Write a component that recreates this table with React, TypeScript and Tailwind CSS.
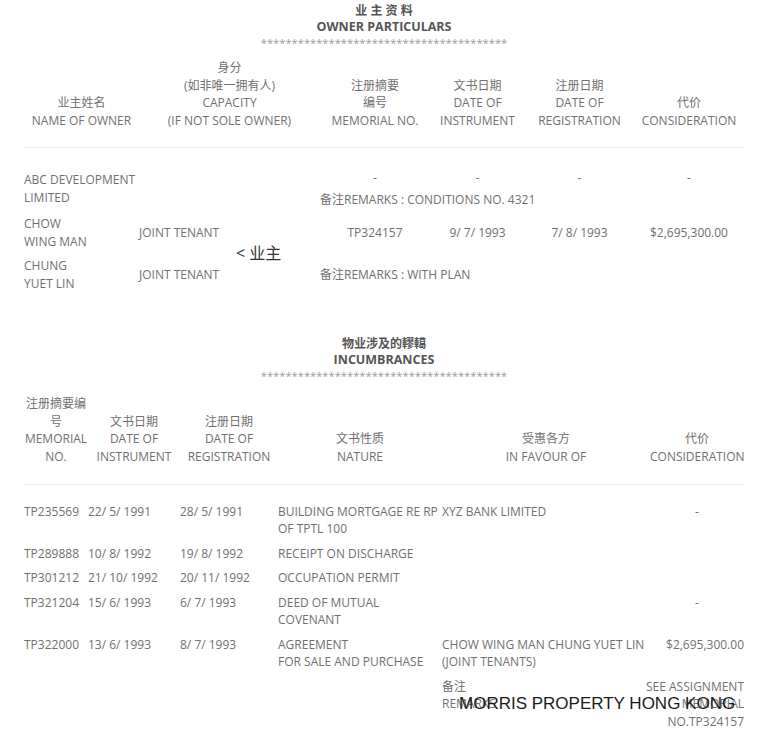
import React from "react";

const STARS = "****************************************";

const owners = [
  { name: ["ABC DEVELOPMENT", "LIMITED"], capacity: "", data: ["-", "-", "-", "-"], remarks: "备注REMARKS : CONDITIONS NO. 4321" },
  { name: ["CHOW", "WING MAN"], capacity: "JOINT TENANT", data: ["TP324157", "9/ 7/ 1993", "7/ 8/ 1993", "$2,695,300.00"], remarks: "" },
  { name: ["CHUNG", "YUET LIN"], capacity: "JOINT TENANT", data: null, remarks: "备注REMARKS : WITH PLAN" },
];

const incumbrances = [
  { no: "TP235569", inst: "22/ 5/ 1991", reg: "28/ 5/ 1991", nature: ["BUILDING MORTGAGE RE RP", "OF TPTL 100"], favour: ["XYZ BANK LIMITED"], amount: "-" },
  { no: "TP289888", inst: "10/ 8/ 1992", reg: "19/ 8/ 1992", nature: ["RECEIPT ON DISCHARGE"], favour: [], amount: "" },
  { no: "TP301212", inst: "21/ 10/ 1992", reg: "20/ 11/ 1992", nature: ["OCCUPATION PERMIT"], favour: [], amount: "" },
  { no: "TP321204", inst: "15/ 6/ 1993", reg: "6/ 7/ 1993", nature: ["DEED OF MUTUAL", "COVENANT"], favour: [], amount: "-" },
  { no: "TP322000", inst: "13/ 6/ 1993", reg: "8/ 7/ 1993", nature: ["AGREEMENT", "FOR SALE AND PURCHASE"], favour: ["CHOW WING MAN CHUNG YUET LIN", "(JOINT TENANTS)"], amount: "$2,695,300.00" },
];

function Lines({ lines }: { lines: string[] }) {
  return (
    <>
      {lines.map((l, i) => (
        <div key={i}>{l}</div>
      ))}
    </>
  );
}

function SectionTitle({ zh, en }: { zh: string; en: string }) {
  return (
    <div className="text-center leading-4">
      <div className="font-semibold text-[#555]">{zh}</div>
      <div className="font-bold text-[12.5px] text-[#555]">{en}</div>
      <div className="text-[#9a9a9a] text-[11.2px]">{STARS}</div>
    </div>
  );
}

export default function App() {
  return (
    <div className="relative w-[768px] min-h-[731px] bg-white px-6 pt-[3px] font-['Open_Sans','Noto_Sans_CJK_SC',sans-serif] text-[12px] text-[#707070]">
      {/* Owner particulars */}
      <SectionTitle zh="业 主 资 料" en="OWNER PARTICULARS" />

      <div className="mt-[8px] grid grid-cols-[115px_181px_110px_95px_109px_110px] items-end border-b border-[#eeeeee] pb-[18px] text-center leading-[17.5px]">
        <div><Lines lines={["业主姓名", "NAME OF OWNER"]} /></div>
        <div><Lines lines={["身分", "(如非唯一拥有人)", "CAPACITY", "(IF NOT SOLE OWNER)"]} /></div>
        <div><Lines lines={["注册摘要", "编号", "MEMORIAL NO."]} /></div>
        <div><Lines lines={["文书日期", "DATE OF", "INSTRUMENT"]} /></div>
        <div><Lines lines={["注册日期", "DATE OF", "REGISTRATION"]} /></div>
        <div><Lines lines={["代价", "CONSIDERATION"]} /></div>
      </div>

      <div className="relative pt-[21px] flex flex-col gap-[7px] leading-[17.5px]">
        {owners.map((o, i) => (
          <div key={i} className="grid grid-cols-[115px_181px_424px] items-center">
            <div><Lines lines={o.name} /></div>
            <div>{o.capacity}</div>
            <div className="flex flex-col gap-[4px]">
              {o.data && (
                <div className="grid grid-cols-[110px_95px_109px_110px] text-center">
                  {o.data.map((d, j) => (
                    <div key={j}>{d}</div>
                  ))}
                </div>
              )}
              {o.remarks && <div>{o.remarks}</div>}
            </div>
          </div>
        ))}
        <div className="absolute left-[212px] top-[95px] text-[16px] leading-5 text-[#333]">&lt; 业主</div>
      </div>

      {/* Incumbrances */}
      <div className="mt-[44px]">
        <SectionTitle zh="物业涉及的轇轕" en="INCUMBRANCES" />
      </div>

      <div className="mt-[11px] grid grid-cols-[64px_92px_98px_164px_208px_94px] items-end border-b border-[#eeeeee] pb-[18.5px] text-center leading-[17.5px]">
        <div><Lines lines={["注册摘要编", "号", "MEMORIAL", "NO."]} /></div>
        <div><Lines lines={["文书日期", "DATE OF", "INSTRUMENT"]} /></div>
        <div><Lines lines={["注册日期", "DATE OF", "REGISTRATION"]} /></div>
        <div><Lines lines={["文书性质", "NATURE"]} /></div>
        <div><Lines lines={["受惠各方", "IN FAVOUR OF"]} /></div>
        <div><Lines lines={["代价", "CONSIDERATION"]} /></div>
      </div>

      <div className="pt-[18px] grid grid-cols-[64px_92px_98px_164px_208px_94px] gap-y-[7px] items-start leading-[17.5px]">
        {incumbrances.map((r) => (
          <React.Fragment key={r.no}>
            <div>{r.no}</div>
            <div>{r.inst}</div>
            <div>{r.reg}</div>
            <div><Lines lines={r.nature} /></div>
            <div><Lines lines={r.favour} /></div>
            <div className={r.amount === "-" ? "text-center" : "text-right"}>{r.amount}</div>
          </React.Fragment>
        ))}
        <div className="col-start-5 col-span-2 flex justify-between">
          <div><Lines lines={["备注", "REMARKS"]} /></div>
          <div className="text-right"><Lines lines={["SEE ASSIGNMENT", "MEMORIAL", "NO.TP324157"]} /></div>
        </div>
      </div>

      <div className="absolute left-[459px] top-[695px] font-['Liberation_Sans',Arial,sans-serif] text-[17px] leading-[17px] text-[#1a1a1a]">
        MORRIS PROPERTY HONG KONG
      </div>
    </div>
  );
}
